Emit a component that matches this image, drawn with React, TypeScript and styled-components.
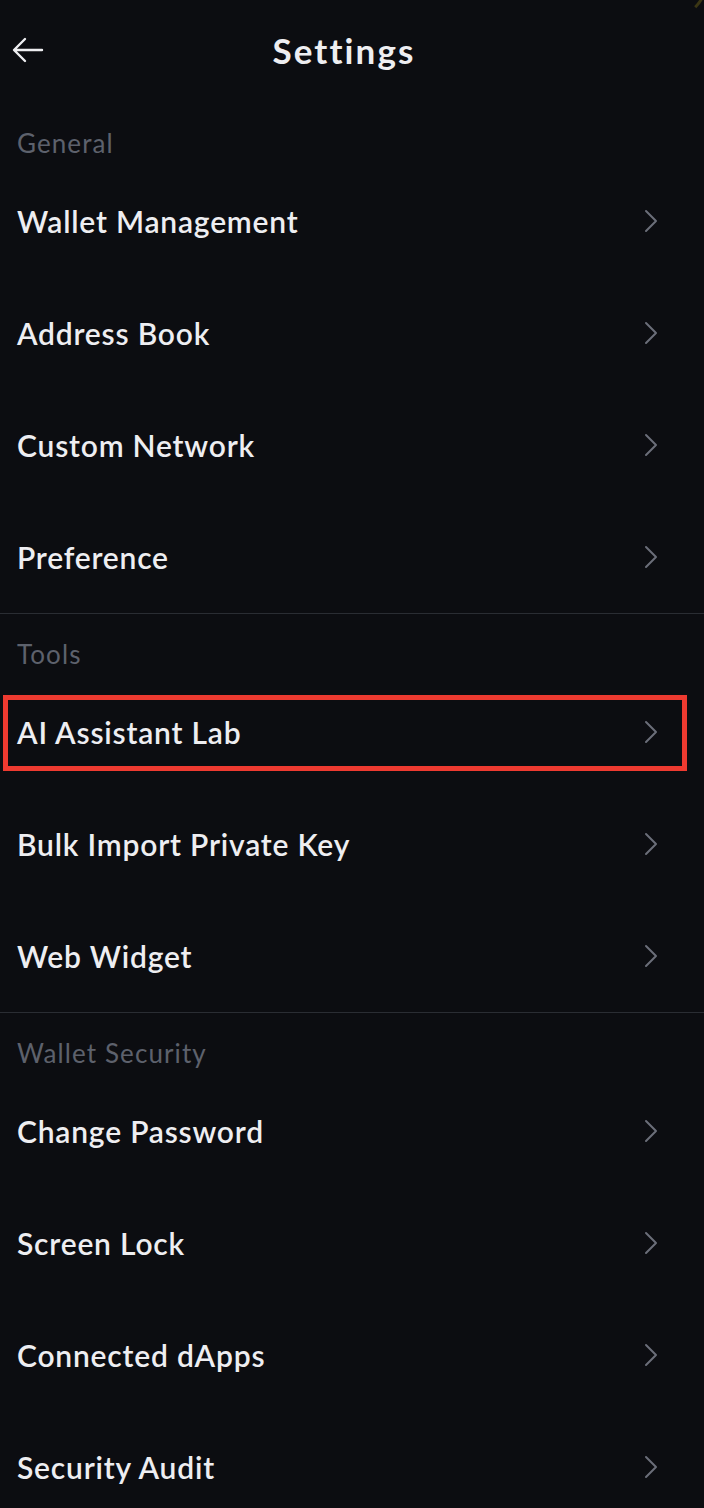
import React from "react";
import styled, { createGlobalStyle } from "styled-components";

const Global = createGlobalStyle`
  html, body { margin: 0; padding: 0; background: #0c0d11; }
  body { font-family: "Lato", "Noto Sans", sans-serif; -webkit-font-smoothing: antialiased; }
  *, *::before, *::after { box-sizing: border-box; }
`;

const Page = styled.div`
  position: relative;
  width: 704px;
  min-height: 1508px;
  background: #0c0d11;
  color: #eeeef1;
  overflow: hidden;

  &::before {
    content: "";
    position: absolute;
    top: -60px;
    right: -4px;
    width: 80px;
    height: 80px;
    border-radius: 50%;
    border-right: 3px solid #3b3614;
    border-bottom: 3px solid transparent;
    pointer-events: none;
  }
`;

const Header = styled.header`
  height: 103px;
  display: grid;
  grid-template-columns: 60px 1fr 76px;
  align-items: start;
  padding-top: 30px;
`;

const BackButton = styled.button`
  background: none;
  border: none;
  padding: 0 0 0 12px;
  height: 40px;
  display: flex;
  align-items: center;
  color: #eeeef1;
  cursor: pointer;
`;

const Title = styled.h1`
  margin: 0;
  text-align: center;
  font-size: 35px;
  font-weight: 700;
  line-height: 40px;
  letter-spacing: 2.1px;
  color: #eeeef1;
`;

const Section = styled.section<{ $divider?: boolean }>`
  border-top: ${(p) => (p.$divider ? "1px solid #2a2d33" : "none")};
`;

const SectionLabel = styled.div`
  height: 62px;
  padding: 26px 17px 0;
  font-size: 26px;
  line-height: 28px;
  letter-spacing: 1.1px;
  color: #5d616c;
`;

const Row = styled.div<{ $highlight?: boolean }>`
  position: relative;
  height: 112px;
  display: flex;
  align-items: center;
  justify-content: space-between;
  padding: 0 46px 0 17px;
  font-size: 30px;
  font-weight: 600;
  letter-spacing: 0.8px;
  cursor: pointer;

  &::after {
    content: "";
    display: ${(p) => (p.$highlight ? "block" : "none")};
    position: absolute;
    left: 3px;
    width: 684px;
    top: 19px;
    height: 76px;
    border: 5px solid #ee3a30;
    pointer-events: none;
  }
`;

const Chevron = () => (
  <svg width="14" height="24" viewBox="0 0 14 24" fill="none">
    <path d="M2 2l10 10L2 22" stroke="#6b6e79" strokeWidth="2" strokeLinecap="round" strokeLinejoin="round" />
  </svg>
);

const BackArrow = () => (
  <svg width="32" height="26" viewBox="0 0 32 26" fill="none">
    <path d="M30 13H3M13 2L2 13l11 11" stroke="#eeeef1" strokeWidth="2.4" strokeLinecap="round" strokeLinejoin="round" />
  </svg>
);

const sections: { label: string; items: string[] }[] = [
  { label: "General", items: ["Wallet Management", "Address Book", "Custom Network", "Preference"] },
  { label: "Tools", items: ["AI Assistant Lab", "Bulk Import Private Key", "Web Widget"] },
  { label: "Wallet Security", items: ["Change Password", "Screen Lock", "Connected dApps", "Security Audit"] },
];

export default function App() {
  return (
    <>
      <Global />
      <Page>
        <Header>
          <BackButton aria-label="Back">
            <BackArrow />
          </BackButton>
          <Title>Settings</Title>
          <div />
        </Header>
        {sections.map((s, i) => (
          <Section key={s.label} $divider={i > 0}>
            <SectionLabel>{s.label}</SectionLabel>
            {s.items.map((it) => (
              <Row key={it} $highlight={it === "AI Assistant Lab"}>
                <span>{it}</span>
                <Chevron />
              </Row>
            ))}
          </Section>
        ))}
      </Page>
    </>
  );
}
